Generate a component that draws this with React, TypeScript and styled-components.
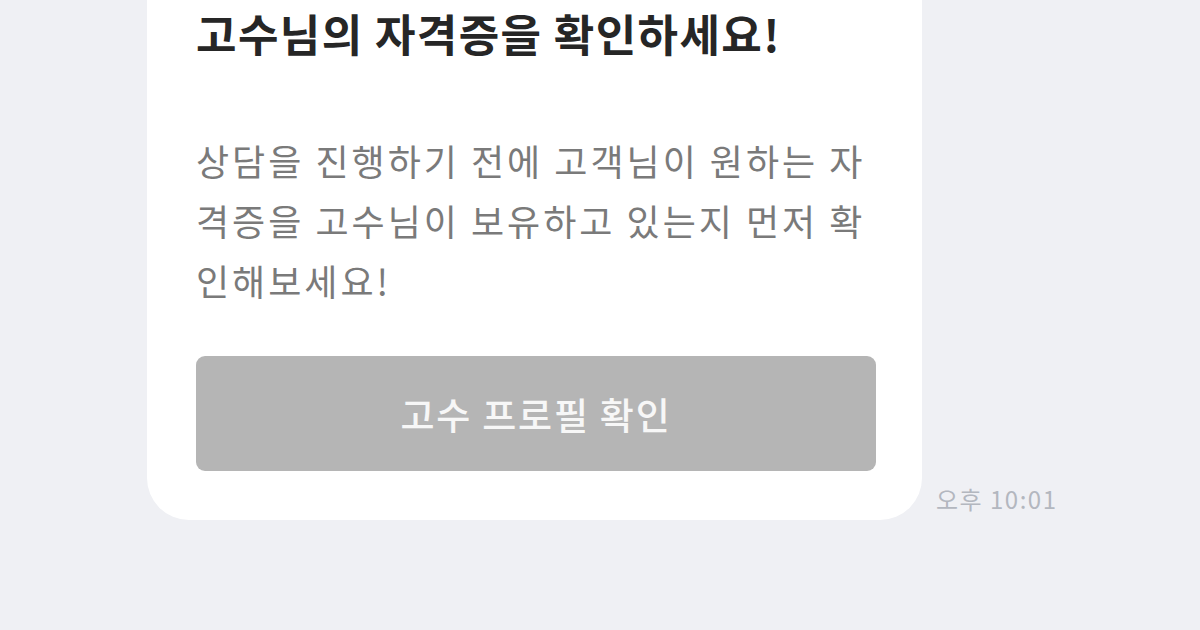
import React from "react"
import styled, { createGlobalStyle } from "styled-components"

const GlobalStyle = createGlobalStyle`
  html, body {
    margin: 0;
    padding: 0;
    background: #eff0f4;
  }
  body {
    font-family: "Noto Sans CJK KR", "Noto Sans", sans-serif;
    width: 1200px;
    height: 630px;
    overflow: hidden;
  }
`

const Page = styled.div`
  display: flex;
  align-items: flex-end;
  gap: 14px;
  padding-left: 147px;
`

const Bubble = styled.div`
  width: 775px;
  box-sizing: border-box;
  padding: 5px 46px 49px 49px;
  background: #ffffff;
  border-radius: 0 0 42px 42px;
  display: flex;
  flex-direction: column;
`

const Title = styled.h2`
  margin: 0;
  font-size: 44px;
  line-height: 56px;
  font-weight: 700;
  color: #262626;
  letter-spacing: 1.4px;
`

const Body = styled.p`
  margin: 69px 0 0;
  font-size: 36px;
  line-height: 60px;
  font-weight: 400;
  color: #7a7a7a;
  letter-spacing: 3px;
  word-break: break-all;
`

const ActionButton = styled.button`
  margin-top: 46px;
  width: 680px;
  height: 115px;
  border: none;
  border-radius: 9px;
  background: #b5b5b5;
  color: #f7f7f7;
  font-family: inherit;
  font-size: 37px;
  font-weight: 500;
  letter-spacing: 1.8px;
`

const Time = styled.span`
  margin-bottom: 6px;
  font-size: 24px;
  line-height: 30px;
  color: #b3b7bf;
  letter-spacing: 1.5px;
  white-space: nowrap;
`

export default function App() {
  return (
    <>
      <GlobalStyle />
      <Page>
        <Bubble>
          <Title>고수님의 자격증을 확인하세요!</Title>
          <Body>
            상담을 진행하기 전에 고객님이 원하는 자격증을 고수님이 보유하고 있는지 먼저 확인해보세요!
          </Body>
          <ActionButton>고수 프로필 확인</ActionButton>
        </Bubble>
        <Time>오후 10:01</Time>
      </Page>
    </>
  )
}
